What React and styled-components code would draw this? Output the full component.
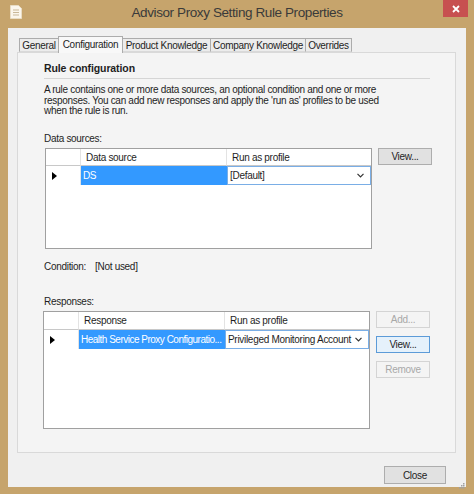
import styled, { createGlobalStyle } from "styled-components";

const Global = createGlobalStyle`
  html, body { margin: 0; padding: 0; }
  body {
    width: 474px;
    height: 494px;
    overflow: hidden;
    font-family: "Liberation Sans", Arial, sans-serif;
    font-size: 10px;
    letter-spacing: -0.3px;
    color: #1e1e1e;
  }
`;

const Window = styled.div`
  width: 474px;
  height: 494px;
  background: #c6a46c;
  display: flex;
  flex-direction: column;
  box-sizing: border-box;
  padding: 0 8px 7px 8px;
`;

const TitleBar = styled.div`
  height: 28px;
  display: flex;
  align-items: flex-start;
`;

const TitleIcon = styled.div`
  width: 12px;
  height: 14px;
  margin: 5px 0 0 2px;
`;

const Title = styled.div`
  flex: 1;
  text-align: center;
  font-size: 13.5px;
  letter-spacing: -0.4px;
  line-height: 26px;
  color: #3a3a3a;
  padding-left: 9px;
`;

const CloseX = styled.div`
  width: 25px;
  height: 17px;
  margin-right: -2px;
  background: #c75050;
  display: flex;
  align-items: center;
  justify-content: center;
`;

const Client = styled.div`
  flex: 1;
  background: #f0f0f0;
  display: flex;
  flex-direction: column;
  padding: 8px 10px 0 9px;
  position: relative;
`;

const TabRow = styled.div`
  height: 16px;
  display: flex;
  align-items: flex-end;
  padding-left: 3px;
  position: relative;
  z-index: 1;
`;

const Tab = styled.div`
  width: ${(p) => p.$w}px;
  height: ${(p) => (p.$active ? 17 : 14)}px;
  box-sizing: border-box;
  margin-bottom: ${(p) => (p.$active ? -1 : 0)}px;
  margin-left: -1px;
  border: 1px solid #acacac;
  border-bottom: ${(p) => (p.$active ? "none" : "1px solid #d9d9d9")};
  background: ${(p) => (p.$active ? "#f8f8f8" : "#ececec")};
  display: flex;
  align-items: center;
  justify-content: center;
  font-size: 10px;
  color: #1e1e1e;
  white-space: nowrap;
  z-index: ${(p) => (p.$active ? 2 : 1)};
  padding-bottom: ${(p) => (p.$active ? 2 : 0)}px;
`;

const Panel = styled.div`
  height: 401px;
  box-sizing: border-box;
  border: 1px solid #d9d9d9;
  background: #f4f4f4;
  padding: 8px 23px 0 26px;
  display: flex;
  flex-direction: column;
`;

const Heading = styled.div`
  font-weight: bold;
  font-size: 10.5px;
  letter-spacing: -0.1px;
  line-height: 14px;
  color: #1e1e1e;
`;

const Divider = styled.div`
  height: 1px;
  background: #d5d5d5;
  margin-top: 3px;
  width: 386px;
`;

const Para = styled.p`
  margin: 6px 0 0 0;
  line-height: 10.7px;
  font-size: 10px;
  width: 345px;
`;

const Label = styled.div`
  margin-top: ${(p) => p.$mt}px;
  line-height: 11px;
`;

const Condition = styled.div`
  margin-top: 12px;
  line-height: 11px;
  display: flex;
  gap: 9px;
`;

const GridRow = styled.div`
  margin-top: 4px;
  display: flex;
  gap: 6px;
  align-items: flex-start;
`;

const Grid = styled.div`
  width: 327px;
  height: ${(p) => p.$h}px;
  box-sizing: border-box;
  border: 1px solid #a0a0a0;
  background: #fff;
  margin-left: ${(p) => p.$ml}px;
`;

const Row = styled.div`
  display: grid;
  grid-template-columns: 35px 146px 1fr;
  height: ${(p) => p.$h}px;
`;

const HeadCell = styled.div`
  border-right: 1px solid #e3e3e3;
  border-bottom: 1px solid #c8c8c8;
  display: flex;
  align-items: center;
  padding-left: 5px;
  &:last-child { border-right: none; }
`;

const RowHead = styled.div`
  display: flex;
  align-items: center;
  padding-left: 6px;
  border-right: 1px solid #e3e3e3;
`;

const SelCell = styled.div`
  background: #3399ff;
  color: #fff;
  display: flex;
  align-items: center;
  padding-left: 2px;
  letter-spacing: -0.5px;
  white-space: nowrap;
  overflow: hidden;
`;

const ComboCell = styled.div`
  border: 1px solid #7aaee6;
  display: flex;
  align-items: center;
  justify-content: space-between;
  padding: 0 6px 0 2px;
  white-space: nowrap;
`;

const Buttons = styled.div`
  display: flex;
  flex-direction: column;
  gap: 8px;
`;

const Button = styled.div`
  width: ${(p) => p.$w || 54}px;
  height: ${(p) => p.$h || 17}px;
  box-sizing: border-box;
  border: 1px solid ${(p) => (p.$disabled ? "#d4d4d4" : p.$focus ? "#5c9bd8" : "#adadad")};
  background: ${(p) => (p.$disabled ? "#f4f4f4" : p.$focus ? "#e5f1fb" : "#e1e1e1")};
  color: ${(p) => (p.$disabled ? "#a8a8a8" : "#1e1e1e")};
  display: flex;
  align-items: center;
  justify-content: center;
  font-size: 10px;
`;

const Footer = styled.div`
  flex: 1;
  display: flex;
  justify-content: flex-end;
  padding: 13px 10px 0 0;
`;

const Grip = styled.div`
  position: absolute;
  right: 1px;
  bottom: 1px;
  width: 6px;
  height: 6px;
`;

const Arrow = () => (
  <svg width="5" height="8" viewBox="0 0 5 8">
    <path d="M0 0 L5 4 L0 8 Z" fill="#000" />
  </svg>
);

const Chevron = () => (
  <svg width="7" height="5" viewBox="0 0 7 5">
    <path d="M0.5 0.8 L3.5 3.8 L6.5 0.8" fill="none" stroke="#333" strokeWidth="1.2" />
  </svg>
);

export default function App() {
  return (
    <>
      <Global />
      <Window>
        <TitleBar>
          <TitleIcon>
            <svg width="12" height="14" viewBox="0 0 12 14">
              <path d="M0.5 0.5 H8.5 L11.5 3.5 V13.5 H0.5 Z" fill="#fbf6ec" stroke="#e8dcc4" />
              <path d="M3 5 H9 M3 7.5 H9 M3 10 H9" stroke="#c9b898" strokeWidth="1" />
            </svg>
          </TitleIcon>
          <Title>Advisor Proxy Setting Rule Properties</Title>
          <CloseX>
            <svg width="8" height="8" viewBox="0 0 8 8">
              <path d="M1 1 L7 7 M7 1 L1 7" stroke="#fff" strokeWidth="1.8" />
            </svg>
          </CloseX>
        </TitleBar>
        <Client>
          <TabRow>
            <Tab $w={40}>General</Tab>
            <Tab $w={65} $active>Configuration</Tab>
            <Tab $w={89}>Product Knowledge</Tab>
            <Tab $w={96}>Company Knowledge</Tab>
            <Tab $w={47}>Overrides</Tab>
          </TabRow>
          <Panel>
            <Heading>Rule configuration</Heading>
            <Divider />
            <Para>
              A rule contains one or more data sources, an optional condition and one or more
              responses. You can add new responses and apply the 'run as' profiles to be used when
              the rule is run.
            </Para>
            <Label $mt={16}>Data sources:</Label>
            <GridRow>
              <Grid $h={101} $ml={1}>
                <Row $h={17}>
                  <HeadCell />
                  <HeadCell>Data source</HeadCell>
                  <HeadCell>Run as profile</HeadCell>
                </Row>
                <Row $h={19}>
                  <RowHead><Arrow /></RowHead>
                  <SelCell>DS</SelCell>
                  <ComboCell>[Default]<Chevron /></ComboCell>
                </Row>
              </Grid>
              <Buttons>
                <Button>View...</Button>
              </Buttons>
            </GridRow>
            <Condition>
              <span>Condition:</span>
              <span>[Not used]</span>
            </Condition>
            <Label $mt={24}>Responses:</Label>
            <GridRow>
              <Grid $h={118} $ml={-1}>
                <Row $h={18}>
                  <HeadCell />
                  <HeadCell>Response</HeadCell>
                  <HeadCell>Run as profile</HeadCell>
                </Row>
                <Row $h={19}>
                  <RowHead><Arrow /></RowHead>
                  <SelCell>Health Service Proxy Configuratio...</SelCell>
                  <ComboCell>Privileged Monitoring Account<Chevron /></ComboCell>
                </Row>
              </Grid>
              <Buttons>
                <Button $disabled>Add...</Button>
                <Button $focus>View...</Button>
                <Button $disabled>Remove</Button>
              </Buttons>
            </GridRow>
          </Panel>
          <Footer>
            <Button $w={62} $h={18}>Close</Button>
          </Footer>
          <Grip>
            <svg width="6" height="6" viewBox="0 0 6 6">
              <rect x="4" y="0" width="1.5" height="1.5" fill="#a0a0a0" />
              <rect x="2" y="2" width="1.5" height="1.5" fill="#a0a0a0" />
              <rect x="4" y="2" width="1.5" height="1.5" fill="#a0a0a0" />
              <rect x="0" y="4" width="1.5" height="1.5" fill="#a0a0a0" />
              <rect x="2" y="4" width="1.5" height="1.5" fill="#a0a0a0" />
              <rect x="4" y="4" width="1.5" height="1.5" fill="#a0a0a0" />
            </svg>
          </Grip>
        </Client>
      </Window>
    </>
  );
}
